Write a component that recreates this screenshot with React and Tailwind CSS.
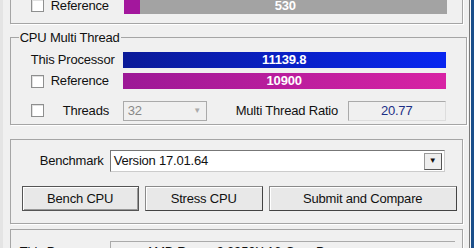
import { useState } from 'react'

const font = { fontFamily: '"Liberation Sans", Arial, sans-serif', letterSpacing: '-0.2px' }

function Check() {
  return <span className="block h-[13px] w-[13px] shrink-0 border border-[#8e8f8f] bg-white shadow-[inset_1px_1px_0_#e0e0e0]" />
}

function Bar({ value, from, to, split }) {
  return (
    <div
      className="relative flex h-[16px] w-[323px] items-center justify-center text-[13px] font-bold text-white"
      style={{ background: split ? `linear-gradient(90deg, ${from} 0 ${split}, ${to} ${split} 100%)` : `linear-gradient(90deg, ${from}, ${to})` }}
    >
      {value}
    </div>
  )
}

function Button({ children, def, w }) {
  return (
    <button
      className={`h-[25px] ${w} border bg-[#e8e8e8] text-[13px] text-[#111] ${def ? 'border-[#555] shadow-[inset_1px_1px_0_#fff,inset_-1px_-1px_0_#999]' : 'border-[#8a8a8a] border-r-[#444] border-b-[#444] shadow-[inset_1px_1px_0_#fff]'}`}
    >
      {children}
    </button>
  )
}

export default function App() {
  const [ver] = useState('Version 17.01.64')
  return (
    <div className="flex h-[248px] w-[474px] overflow-hidden bg-[#f0f0f0] text-[#111]" style={font}>
      <div className="w-[3px] bg-[#e4e4e4]" />
      <div className="flex w-[464px] flex-col pl-[7px] pr-[4px]">
        {/* top group, cropped */}
        <div className="-mt-[2px] h-[26px] shrink-0 border border-t-0 border-[#a5a5a5] shadow-[1px_1px_0_#fff]">
          <div className="flex h-[16px] items-center">
            <div className="ml-[20px] -mt-[2px]"><Check /></div>
            <span className="ml-[7px] w-[73px] text-[13px]">Reference</span>
            <Bar value="530" from="#a3179d" to="#a3a3a3" split="5%" />
          </div>
        </div>

        {/* multi thread */}
        <fieldset className="mt-[6px] h-[95px] shrink-0 border border-[#a5a5a5] px-[20px] shadow-[1px_1px_0_#fff]">
          <legend className="ml-[-12px] px-[1px] text-[13px] leading-[15px]">CPU Multi Thread</legend>
          <div className="mt-[7px] flex h-[16px] items-center">
            <span className="w-[92px] text-[13px]">This Processor</span>
            <Bar value="11139.8" from="#0b1a98" to="#0826f0" />
          </div>
          <div className="mt-[5px] flex h-[16px] items-center">
            <Check />
            <span className="ml-[7px] w-[72px] text-[13px]">Reference</span>
            <Bar value="10900" from="#9c1896" to="#d823a4" />
          </div>
          <div className="mt-[12px] flex h-[20px] items-center">
            <div className="-mt-[2px]"><Check /></div>
            <span className="ml-[19px] w-[60px] text-[13px]">Threads</span>
            <div className="flex h-[20px] w-[84px] items-center justify-between border border-[#aaa] bg-[#f0f0f0] pl-[4px] text-[13px] text-[#888]">
              32
              <span className="flex h-[17px] w-[17px] items-center justify-center text-[8px] text-[#aaa]">▼</span>
            </div>
            <span className="ml-[29px] w-[112px] text-[13px]">Multi Thread Ratio</span>
            <div className="flex h-[20px] w-[98px] items-center justify-center border border-[#aaa] border-r-[#ddd] border-b-[#ddd] text-[13px] text-[#1c2f86]">
              20.77
            </div>
          </div>
        </fieldset>

        {/* benchmark */}
        <div className="mt-[14px] h-[85px] shrink-0 border border-[#a5a5a5] shadow-[1px_1px_0_#fff]">
          <div className="mt-[10px] flex h-[22px] items-center">
            <span className="ml-[29px] w-[70px] text-[13px]">Benchmark</span>
            <div className="flex h-[22px] w-[335px] items-center justify-between border border-[#777] border-r-[#ccc] border-b-[#ccc] bg-white pl-[3px] text-[13px]">
              {ver}
              <span className="mr-[2px] flex h-[17px] w-[18px] items-center justify-center border border-[#999] border-r-[#555] border-b-[#555] bg-[#eee] text-[8px]">▼</span>
            </div>
          </div>
          <div className="mt-[14px] flex items-center gap-[6px] pl-[11px]">
            <Button def w="w-[117px]">Bench CPU</Button>
            <Button w="w-[118px]">Stress CPU</Button>
            <Button w="w-[188px]">Submit and Compare</Button>
          </div>
        </div>

        {/* bottom group, cropped */}
        <div className="mt-[5px] h-[40px] shrink-0 border border-[#a5a5a5] shadow-[1px_1px_0_#fff]">
          <div className="mt-[11px] flex items-start">
            <span className="ml-[9px] mt-[1px] w-[90px] text-[13px]">This Processor</span>
            <div className="h-[20px] w-[345px] border border-[#aaa] border-r-0 pl-[35px] text-[13px]">AMD Ryzen 9 3950X 16-Core Processor</div>
          </div>
        </div>
      </div>
      <div className="ml-[2px] w-[1px] bg-[#7a7a7a]" />
      <div className="w-[2px] bg-[#fafafa]" />
      <div className="w-[3px] bg-[#1b4f8a]" />
    </div>
  )
}
